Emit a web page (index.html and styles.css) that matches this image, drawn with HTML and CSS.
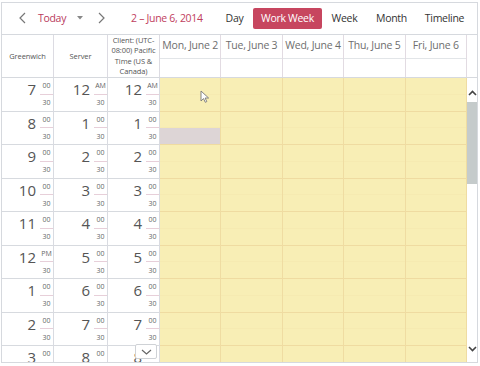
FILE: index.html
```html
<!DOCTYPE html>
<html>
<head>
<meta charset="utf-8">
<link rel="stylesheet" href="styles.css">
</head>
<body>
<div class="sched">
  <div class="toolbar">
    <span class="nav prev"><svg width="7" height="12" viewBox="0 0 7 12"><path d="M6 1 L1 6 L6 11" fill="none" stroke="#777" stroke-width="1.2"/></svg></span>
    <span class="today">Today</span>
    <span class="caret"><svg width="6" height="4" viewBox="0 0 6 4"><path d="M0 0 H6 L3 3.5 Z" fill="#888"/></svg></span>
    <span class="nav next"><svg width="7" height="12" viewBox="0 0 7 12"><path d="M1 1 L6 6 L1 11" fill="none" stroke="#777" stroke-width="1.2"/></svg></span>
    <span class="range">2 – June 6, 2014</span>
    <span class="view v-day">Day</span>
    <span class="view v-ww active">Work Week</span>
    <span class="view v-week">Week</span>
    <span class="view v-month">Month</span>
    <span class="view v-tl">Timeline</span>
  </div>
  <div class="header">
    <div class="tz">Greenwich</div>
    <div class="tz">Server</div>
    <div class="tz tz-client">Client: (UTC-<br>08:00) Pacific<br>Time (US &amp;<br>Canada)</div>
    <div class="dayhead">
      <div class="date">Mon, June 2</div>
      <div class="allday"></div>
    </div>
    <div class="dayhead">
      <div class="date">Tue, June 3</div>
      <div class="allday"></div>
    </div>
    <div class="dayhead">
      <div class="date">Wed, June 4</div>
      <div class="allday"></div>
    </div>
    <div class="dayhead">
      <div class="date">Thu, June 5</div>
      <div class="allday"></div>
    </div>
    <div class="dayhead">
      <div class="date">Fri, June 6</div>
      <div class="allday"></div>
    </div>
    <div class="sc-head"></div>
  </div>
  <div class="body">
    <div class="tcol">
      <div class="hr"><span class="h">7</span><span class="m"><span class="m0">00</span><span class="m3">30</span></span></div>
      <div class="hr"><span class="h">8</span><span class="m"><span class="m0">00</span><span class="m3">30</span></span></div>
      <div class="hr"><span class="h">9</span><span class="m"><span class="m0">00</span><span class="m3">30</span></span></div>
      <div class="hr"><span class="h">10</span><span class="m"><span class="m0">00</span><span class="m3">30</span></span></div>
      <div class="hr"><span class="h">11</span><span class="m"><span class="m0">00</span><span class="m3">30</span></span></div>
      <div class="hr"><span class="h">12</span><span class="m"><span class="m0">PM</span><span class="m3">30</span></span></div>
      <div class="hr"><span class="h">1</span><span class="m"><span class="m0">00</span><span class="m3">30</span></span></div>
      <div class="hr"><span class="h">2</span><span class="m"><span class="m0">00</span><span class="m3">30</span></span></div>
      <div class="hr"><span class="h">3</span><span class="m"><span class="m0">00</span><span class="m3">30</span></span></div>
    </div>
    <div class="tcol">
      <div class="hr"><span class="h">12</span><span class="m"><span class="m0">AM</span><span class="m3">30</span></span></div>
      <div class="hr"><span class="h">1</span><span class="m"><span class="m0">00</span><span class="m3">30</span></span></div>
      <div class="hr"><span class="h">2</span><span class="m"><span class="m0">00</span><span class="m3">30</span></span></div>
      <div class="hr"><span class="h">3</span><span class="m"><span class="m0">00</span><span class="m3">30</span></span></div>
      <div class="hr"><span class="h">4</span><span class="m"><span class="m0">00</span><span class="m3">30</span></span></div>
      <div class="hr"><span class="h">5</span><span class="m"><span class="m0">00</span><span class="m3">30</span></span></div>
      <div class="hr"><span class="h">6</span><span class="m"><span class="m0">00</span><span class="m3">30</span></span></div>
      <div class="hr"><span class="h">7</span><span class="m"><span class="m0">00</span><span class="m3">30</span></span></div>
      <div class="hr"><span class="h">8</span><span class="m"><span class="m0">00</span><span class="m3">30</span></span></div>
    </div>
    <div class="tcol client">
      <div class="hr"><span class="h">12</span><span class="m"><span class="m0">AM</span><span class="m3">30</span></span></div>
      <div class="hr"><span class="h">1</span><span class="m"><span class="m0">00</span><span class="m3">30</span></span></div>
      <div class="hr"><span class="h">2</span><span class="m"><span class="m0">00</span><span class="m3">30</span></span></div>
      <div class="hr"><span class="h">3</span><span class="m"><span class="m0">00</span><span class="m3">30</span></span></div>
      <div class="hr"><span class="h">4</span><span class="m"><span class="m0">00</span><span class="m3">30</span></span></div>
      <div class="hr"><span class="h">5</span><span class="m"><span class="m0">00</span><span class="m3">30</span></span></div>
      <div class="hr"><span class="h">6</span><span class="m"><span class="m0">00</span><span class="m3">30</span></span></div>
      <div class="hr"><span class="h">7</span><span class="m"><span class="m0">00</span><span class="m3">30</span></span></div>
      <div class="hr"><span class="h">8</span><span class="m"><span class="m0">00</span><span class="m3">30</span></span></div>
      <button class="more"><svg width="11" height="6" viewBox="0 0 11 6"><path d="M1 1 L5.5 5 L10 1" fill="none" stroke="#666" stroke-width="1.2"/></svg></button>
    </div>
    <div class="dcol mon">
      <div class="dh"><div class="dt"></div><div class="db"></div></div>
      <div class="dh"><div class="dt"></div><div class="db sel"></div></div>
      <div class="dh"><div class="dt"></div><div class="db"></div></div>
      <div class="dh"><div class="dt"></div><div class="db"></div></div>
      <div class="dh"><div class="dt"></div><div class="db"></div></div>
      <div class="dh"><div class="dt"></div><div class="db"></div></div>
      <div class="dh"><div class="dt"></div><div class="db"></div></div>
      <div class="dh"><div class="dt"></div><div class="db"></div></div>
      <div class="dh"><div class="dt"></div><div class="db"></div></div>
      <svg class="cursor" width="10" height="13" viewBox="0 0 10 13"><path d="M1 1 V11 L3.5 8.6 L5.3 12.3 L6.8 11.6 L5.1 8 H8.6 Z" fill="#fff" stroke="#777" stroke-width="0.9" stroke-linejoin="round"/></svg>
    </div>
    <div class="dcol">
      <div class="dh"><div class="dt"></div><div class="db"></div></div>
      <div class="dh"><div class="dt"></div><div class="db"></div></div>
      <div class="dh"><div class="dt"></div><div class="db"></div></div>
      <div class="dh"><div class="dt"></div><div class="db"></div></div>
      <div class="dh"><div class="dt"></div><div class="db"></div></div>
      <div class="dh"><div class="dt"></div><div class="db"></div></div>
      <div class="dh"><div class="dt"></div><div class="db"></div></div>
      <div class="dh"><div class="dt"></div><div class="db"></div></div>
      <div class="dh"><div class="dt"></div><div class="db"></div></div>
    </div>
    <div class="dcol">
      <div class="dh"><div class="dt"></div><div class="db"></div></div>
      <div class="dh"><div class="dt"></div><div class="db"></div></div>
      <div class="dh"><div class="dt"></div><div class="db"></div></div>
      <div class="dh"><div class="dt"></div><div class="db"></div></div>
      <div class="dh"><div class="dt"></div><div class="db"></div></div>
      <div class="dh"><div class="dt"></div><div class="db"></div></div>
      <div class="dh"><div class="dt"></div><div class="db"></div></div>
      <div class="dh"><div class="dt"></div><div class="db"></div></div>
      <div class="dh"><div class="dt"></div><div class="db"></div></div>
    </div>
    <div class="dcol">
      <div class="dh"><div class="dt"></div><div class="db"></div></div>
      <div class="dh"><div class="dt"></div><div class="db"></div></div>
      <div class="dh"><div class="dt"></div><div class="db"></div></div>
      <div class="dh"><div class="dt"></div><div class="db"></div></div>
      <div class="dh"><div class="dt"></div><div class="db"></div></div>
      <div class="dh"><div class="dt"></div><div class="db"></div></div>
      <div class="dh"><div class="dt"></div><div class="db"></div></div>
      <div class="dh"><div class="dt"></div><div class="db"></div></div>
      <div class="dh"><div class="dt"></div><div class="db"></div></div>
    </div>
    <div class="dcol">
      <div class="dh"><div class="dt"></div><div class="db"></div></div>
      <div class="dh"><div class="dt"></div><div class="db"></div></div>
      <div class="dh"><div class="dt"></div><div class="db"></div></div>
      <div class="dh"><div class="dt"></div><div class="db"></div></div>
      <div class="dh"><div class="dt"></div><div class="db"></div></div>
      <div class="dh"><div class="dt"></div><div class="db"></div></div>
      <div class="dh"><div class="dt"></div><div class="db"></div></div>
      <div class="dh"><div class="dt"></div><div class="db"></div></div>
      <div class="dh"><div class="dt"></div><div class="db"></div></div>
    </div>
    <div class="scroll">
      <span class="arrow up"><svg width="9" height="6" viewBox="0 0 9 6"><path d="M1 5 L4.5 1.5 L8 5" fill="none" stroke="#444" stroke-width="1.6"/></svg></span>
      <span class="thumb"></span>
      <span class="track"></span>
      <span class="arrow down"><svg width="9" height="6" viewBox="0 0 9 6"><path d="M1 1 L4.5 4.5 L8 1" fill="none" stroke="#444" stroke-width="1.6"/></svg></span>
    </div>
  </div>
</div>
</body>
</html>
```
FILE: styles.css
```css
* { box-sizing: border-box; }
html, body { margin: 0; padding: 0; background: #fff; }
body { font-family: "Open Sans", "Noto Sans", sans-serif; color: #333; }

.sched {
  margin: 2px 0 0 1px;
  width: 477px;
  height: 361px;
  border: 1px solid #d6d9de;
  display: flex;
  flex-direction: column;
  overflow: hidden;
}

/* toolbar */
.toolbar {
  height: 32px;
  flex: none;
  border-bottom: 1px solid #d6d9de;
  display: flex;
  align-items: center;
  padding-bottom: 1px;
  font-size: 10.5px;
  letter-spacing: -0.3px;
}
.nav { width: 14px; height: 14px; display: flex; align-items: center; justify-content: center; }
.prev { margin-left: 13px; }
.today { margin-left: 9px; width: 36px; color: #b93a5c; }
.caret { width: 12px; display: flex; justify-content: center; }
.next { margin-left: 8px; }
.range { margin-left: 23px; width: 85px; color: #bf3e5e; white-space: nowrap; }
.view { height: 21px; display: flex; align-items: center; justify-content: center; color: #333; white-space: nowrap; }
.v-day { width: 37px; }
.v-ww { width: 69px; }
.v-week { width: 45px; }
.v-month { width: 49px; }
.v-tl { width: 57px; }
.view.active { background: #c7465f; color: #fff; border-radius: 2px; }

/* header */
.header {
  flex: none;
  height: 43px;
  display: grid;
  grid-template-columns: 52px 54px 52px repeat(5, 1fr) 10px;
  border-bottom: 1px solid #d6d9de;
}
.tz {
  border-right: 1px solid #dcdbe2;
  display: flex;
  align-items: center;
  justify-content: center;
  text-align: center;
  font-size: 7.5px;
  line-height: 10.3px;
  color: #555;
  white-space: nowrap;
  letter-spacing: -0.1px;
}
.tz-client { padding-bottom: 1px; }
.dayhead { display: flex; flex-direction: column; border-right: 1px solid #e2dbe2; }
.date {
  height: 24px;
  border-bottom: 1px solid #e2e5e8;
  font-size: 10.5px;
  letter-spacing: -0.2px;
  color: #6e6e6e;
  text-align: center;
  padding-top: 3px;
  white-space: nowrap;
}
.allday { flex: 1; }

/* body */
.body {
  flex: 1;
  display: grid;
  grid-template-columns: 52px 54px 52px repeat(5, 1fr) 10px;
  overflow: hidden;
  min-height: 0;
}
.tcol { border-right: 1px solid #d9dbe1; overflow: hidden; position: relative; }
.hr {
  height: 33.5px;
  display: flex;
  border-bottom: 1px solid #d7dadf;
  color: #555;
}
.h {
  flex: 1;
  text-align: right;
  font-size: 15px;
  line-height: 15px;
  padding-right: 4px;
  padding-top: 4px;
}
.m { width: 13px; display: flex; flex-direction: column; font-size: 7px; color: #666; }
.m0 {
  flex: 1;
  border-bottom: 1px solid #e7cfd9;
  display: flex;
  align-items: center;
  justify-content: center;
}
.m3 { flex: 1; display: flex; align-items: center; justify-content: center; }

.more {
  position: absolute;
  left: 27px;
  bottom: 3px;
  width: 22px;
  height: 15px;
  padding: 0;
  background: #fff;
  border: 1px solid #cfd2d6;
  border-radius: 2px;
  display: flex;
  align-items: center;
  justify-content: center;
}

.dcol {
  background: #f8eeb5;
  border-right: 1px solid #efdca2;
  overflow: hidden;
  position: relative;
}
.dh { height: 33.5px; display: flex; flex-direction: column; border-bottom: 1px solid #efdba1; }
.dt { flex: 1; border-bottom: 1px solid #f6eab1; }
.db { flex: 1; }
.db.sel { background: #ddd5d6; }
.cursor { position: absolute; left: 40px; top: 12px; }

.scroll {
  display: flex;
  flex-direction: column;
  align-items: center;
  background: #fff;
}
.arrow { height: 20px; width: 10px; display: flex; align-items: center; justify-content: center; }
.arrow.up { margin-top: 6px; height: 18px; }
.thumb { width: 10px; height: 82px; background: #c5cbcb; }
.track { flex: 1; }
.arrow.down { margin-bottom: 4px; height: 18px; }
```
